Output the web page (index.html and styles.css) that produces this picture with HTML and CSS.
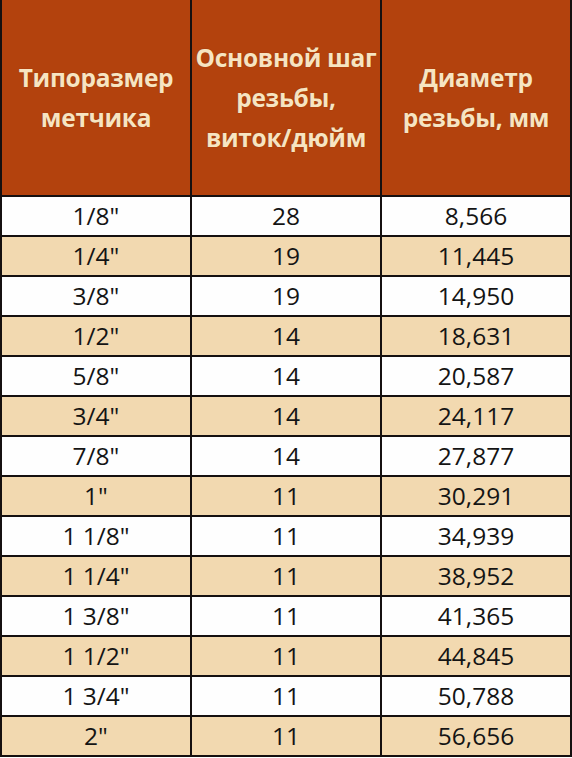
FILE: index.html
```html
<!DOCTYPE html>
<html lang="ru">
<head>
<meta charset="utf-8">
<link rel="stylesheet" href="styles.css">
</head>
<body>
<div class="table">
  <div class="th">Типоразмер<br>метчика</div>
  <div class="th">Основной шаг<br>резьбы,<br>виток/дюйм</div>
  <div class="th">Диаметр<br>резьбы, мм</div>

  <div class="td">1/8"</div><div class="td">28</div><div class="td">8,566</div>
  <div class="td alt">1/4"</div><div class="td alt">19</div><div class="td alt">11,445</div>
  <div class="td">3/8"</div><div class="td">19</div><div class="td">14,950</div>
  <div class="td alt">1/2"</div><div class="td alt">14</div><div class="td alt">18,631</div>
  <div class="td">5/8"</div><div class="td">14</div><div class="td">20,587</div>
  <div class="td alt">3/4"</div><div class="td alt">14</div><div class="td alt">24,117</div>
  <div class="td">7/8"</div><div class="td">14</div><div class="td">27,877</div>
  <div class="td alt">1"</div><div class="td alt">11</div><div class="td alt">30,291</div>
  <div class="td">1 1/8"</div><div class="td">11</div><div class="td">34,939</div>
  <div class="td alt">1 1/4"</div><div class="td alt">11</div><div class="td alt">38,952</div>
  <div class="td">1 3/8"</div><div class="td">11</div><div class="td">41,365</div>
  <div class="td alt">1 1/2"</div><div class="td alt">11</div><div class="td alt">44,845</div>
  <div class="td">1 3/4"</div><div class="td">11</div><div class="td">50,788</div>
  <div class="td alt">2"</div><div class="td alt">11</div><div class="td alt">56,656</div>
</div>
</body>
</html>
```
FILE: styles.css
```css
html, body {
  margin: 0;
  padding: 0;
  background: #ffffff;
}
body {
  width: 572px;
  height: 758px;
  overflow: hidden;
  font-family: "Open Sans", "Noto Sans", sans-serif;
}
.table {
  display: grid;
  grid-template-columns: 188px 188px 188px;
  grid-template-rows: 195px repeat(14, 38px);
  gap: 2px;
  padding: 0 2px 2px 2px;
  background: #151010;
  width: 568px;
}
.th {
  background: #b3420d;
  color: #f7e4c1;
  font-weight: 700;
  font-size: 24.5px;
  line-height: 40px;
  letter-spacing: -0.3px;
  text-align: center;
  display: flex;
  align-items: center;
  justify-content: center;
  text-shadow: 0 0 1px rgba(60, 20, 0, 0.4);
}
.td {
  background: #fefefe;
  color: #141414;
  font-size: 24.5px;
  line-height: 38px;
  text-align: center;
}
.td.alt {
  background: #f2d9b0;
}
```
